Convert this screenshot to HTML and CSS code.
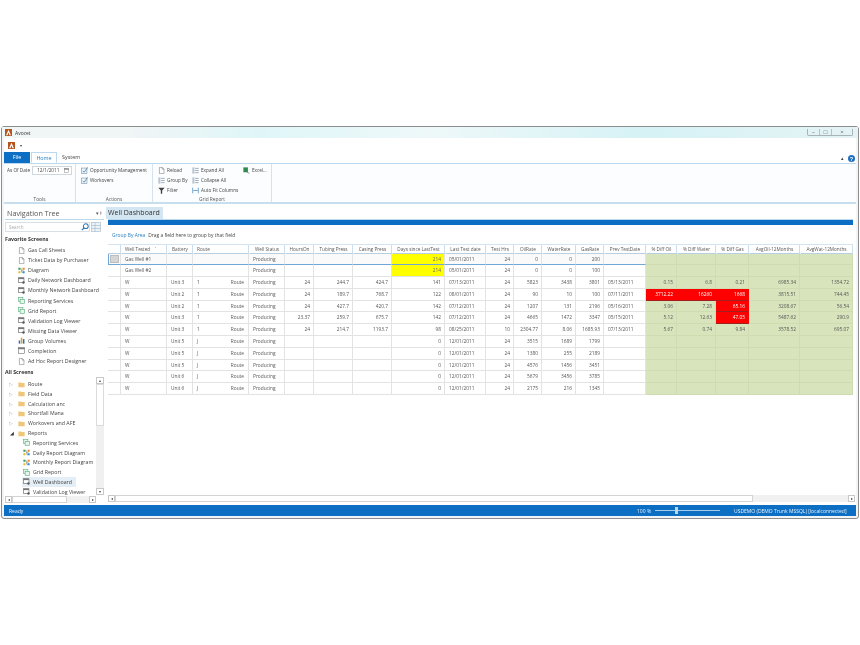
FILE: index.html
```html
<!DOCTYPE html>
<html lang="en">
<head>
  <meta charset="UTF-8" />
  <title>Avocet</title>
  <link rel="stylesheet" href="styles.css" />
</head>
<body>

<svg class="defs" width="0" height="0">
  <symbol id="i-doc" viewBox="0 0 10 10"><path d="M2 .5h4l2.500 2.500v6.500h-6.500z M6 .5v2.500h2.500" fill="#fff" stroke="#777" stroke-width=".8"/></symbol>
  <symbol id="i-diagram" viewBox="0 0 10 10"><path d="M2 2.500h3v5h3M5 5h3" fill="none" stroke="#8a8a8a" stroke-width=".8"/><rect x=".5" y="1" width="3" height="3" fill="#3aa655"/><rect x="6.500" y="1" width="3" height="3" fill="#ef8a2c"/><rect x="6.500" y="6" width="3" height="3" fill="#3a8fd0"/><rect x=".5" y="6" width="3" height="3" fill="#e0c030"/></symbol>
  <symbol id="i-screen" viewBox="0 0 10 10"><rect x=".5" y="1" width="8" height="7" fill="#fff" stroke="#666" stroke-width=".9"/><rect x=".5" y="1" width="8" height="2" fill="#777"/><circle cx="7.800" cy="7.800" r="1.700" fill="#555"/></symbol>
  <symbol id="i-report" viewBox="0 0 10 10"><rect x=".5" y=".5" width="6.500" height="6" fill="#e8f5ec" stroke="#4fa878" stroke-width=".8"/><rect x="3" y="3.500" width="6.500" height="6" fill="#e8f5ec" stroke="#4fa878" stroke-width=".8"/></symbol>
  <symbol id="i-bars" viewBox="0 0 10 10"><rect x="1" y="5" width="2.200" height="4.500" fill="#2f6fb8"/><rect x="4" y="1" width="2.200" height="8.500" fill="#e8a020"/><rect x="7" y="3" width="2.200" height="6.500" fill="#2f6fb8"/></symbol>
  <symbol id="i-cal" viewBox="0 0 10 10"><rect x=".5" y="1" width="9" height="8" fill="#fff" stroke="#666" stroke-width=".8"/><rect x=".5" y="1" width="9" height="2.200" fill="#777"/></symbol>
  <symbol id="i-folder" viewBox="0 0 10 10"><path d="M.5 2h3.500l1 1h4.500v6h-9z" fill="#eec77a"/></symbol>
  <symbol id="i-check" viewBox="0 0 10 10"><rect x=".5" y="1.500" width="8" height="8" fill="#eef5fb" stroke="#6e8fa8" stroke-width=".8"/><path d="M2.500 5.500l2 2 5-7" fill="none" stroke="#3a6f9a" stroke-width="1"/></symbol>
  <symbol id="i-lines" viewBox="0 0 10 10"><rect x=".5" y=".5" width="3" height="9" fill="#b9c6d2"/><path d="M4.500 2h5M4.500 5h5M4.500 8h5" stroke="#7d8fa0" stroke-width="1"/></symbol>
</svg>

<div class="window">
  <div class="titlebar">
    <svg class="logo" viewBox="0 0 10 10"><rect width="10" height="10" fill="#b5541c"/><path d="M1.500 9l3.500-8 3.500 8h-2l-1.500-4-1.500 4z" fill="#fff"/></svg>
    <span class="title">Avocet</span>
    <div class="win-btns"><span>&#8211;</span><span>&#9633;</span><span>&#215;</span></div>
  </div>

  <div class="qat">
    <svg class="logo" viewBox="0 0 10 10"><rect width="10" height="10" fill="#b5541c"/><path d="M1.500 9l3.500-8 3.500 8h-2l-1.500-4-1.500 4z" fill="#fff"/></svg>
    <span class="qat-drop">&#9662;</span>
  </div>

  <div class="tabs">
    <div class="tab tab-file">File</div>
    <div class="tab tab-home">Home</div>
    <div class="tab">System</div>
    <span class="tabs-right">&#9652;</span>
    <svg class="help" viewBox="0 0 10 10"><circle cx="5" cy="5" r="5" fill="#1f6fc0"/><text x="5" y="8" text-anchor="middle" font-size="8" font-weight="700" fill="#fff" font-family="Liberation Sans">?</text></svg>
  </div>

  <div class="ribbon">
    <div class="group group-tools">
      <div class="group-body">
        <div class="asof">
          <span>As Of Date</span>
          <div class="datebox">12/1/2011 <svg class="ico" viewBox="0 0 10 10"><use href="#i-cal"/></svg></div>
        </div>
      </div>
      <div class="group-label">Tools</div>
    </div>
    <div class="group group-actions">
      <div class="group-body col">
        <div class="rb"><svg class="ico"><use href="#i-check"/></svg>Opportunity Management</div>
        <div class="rb"><svg class="ico"><use href="#i-check"/></svg>Workovers</div>
      </div>
      <div class="group-label">Actions</div>
    </div>
    <div class="group group-grid">
      <div class="group-body">
        <div class="col col-a">
          <div class="rb"><svg class="ico"><use href="#i-doc"/></svg>Reload</div>
          <div class="rb"><svg class="ico"><use href="#i-lines"/></svg>Group By</div>
          <div class="rb"><svg class="ico" viewBox="0 0 10 10"><path d="M.5 1h9L6 5v4.500H4V5z" fill="#444"/></svg>Filter</div>
        </div>
        <div class="col col-b">
          <div class="rb"><svg class="ico"><use href="#i-lines"/></svg>Expand All</div>
          <div class="rb"><svg class="ico"><use href="#i-lines"/></svg>Collapse All</div>
          <div class="rb"><svg class="ico" viewBox="0 0 10 10"><path d="M1 1v8M9 1v8M2 5h6" fill="none" stroke="#3a7fb8" stroke-width="1"/></svg>Auto Fit Columns</div>
        </div>
        <div class="col col-c">
          <div class="rb"><svg class="ico" viewBox="0 0 10 10"><rect x=".5" y=".5" width="6.500" height="7" fill="#2f8a4f"/><path d="M6 7.500l3 1.500" stroke="#666" stroke-width="1"/></svg>Excel...</div>
        </div>
      </div>
      <div class="group-label">Grid Report</div>
    </div>
  </div>

  <div class="main">
    <aside class="nav">
      <div class="nav-head"><span>Navigation Tree</span><span class="nav-pins">&#9662; &#8225;</span></div>
      <div class="searchrow">
        <div class="search">Search<svg class="mag" viewBox="0 0 10 10"><circle cx="6" cy="4" r="3" fill="none" stroke="#2d78b8" stroke-width="1.300"/><path d="M4 6L1 9" stroke="#2d78b8" stroke-width="1.500"/></svg></div>
        <svg class="viewbtn" viewBox="0 0 10 10"><rect x=".5" y=".5" width="9" height="9" fill="#eef3f8" stroke="#9db5c9" stroke-width=".6"/><path d="M4 .5v9M.5 3.500h9M.5 6.500h9" stroke="#9db5c9" stroke-width=".6"/></svg>
      </div>
      <div class="nav-scroll">
        <h4>Favorite Screens</h4>
        <ul class="fav">
          <li><svg class="ico"><use href="#i-doc"/></svg>Gas Call Sheets</li>
          <li><svg class="ico"><use href="#i-doc"/></svg>Ticket Data by Purchaser</li>
          <li><svg class="ico"><use href="#i-diagram"/></svg>Diagram</li>
          <li><svg class="ico"><use href="#i-screen"/></svg>Daily Network Dashboard</li>
          <li><svg class="ico"><use href="#i-screen"/></svg>Monthly Network Dashboard</li>
          <li><svg class="ico"><use href="#i-report"/></svg>Reporting Services</li>
          <li><svg class="ico"><use href="#i-report"/></svg>Grid Report</li>
          <li><svg class="ico"><use href="#i-screen"/></svg>Validation Log Viewer</li>
          <li><svg class="ico"><use href="#i-screen"/></svg>Missing Data Viewer</li>
          <li><svg class="ico"><use href="#i-bars"/></svg>Group Volumes</li>
          <li><svg class="ico"><use href="#i-cal"/></svg>Completion</li>
          <li><svg class="ico"><use href="#i-doc"/></svg>Ad Hoc Report Designer</li>
        </ul>
        <h4 class="h-all">All Screens</h4>
        <div class="tree-wrap">
          <div class="tree">
            <div class="t-row"><i class="arrow">&#9655;</i><svg class="ico"><use href="#i-folder"/></svg>Route</div>
            <div class="t-row"><i class="arrow">&#9655;</i><svg class="ico"><use href="#i-folder"/></svg>Field Data</div>
            <div class="t-row"><i class="arrow">&#9655;</i><svg class="ico"><use href="#i-folder"/></svg>Calculation anc</div>
            <div class="t-row"><i class="arrow">&#9655;</i><svg class="ico"><use href="#i-folder"/></svg>Shortfall Mana</div>
            <div class="t-row"><i class="arrow">&#9655;</i><svg class="ico"><use href="#i-folder"/></svg>Workovers and AFE</div>
            <div class="t-row"><i class="arrow dark">&#9698;</i><svg class="ico"><use href="#i-folder"/></svg>Reports</div>
            <div class="t-row sub"><svg class="ico"><use href="#i-report"/></svg>Reporting Services</div>
            <div class="t-row sub"><svg class="ico"><use href="#i-diagram"/></svg>Daily Report Diagram</div>
            <div class="t-row sub"><svg class="ico"><use href="#i-diagram"/></svg>Monthly Report Diagram</div>
            <div class="t-row sub"><svg class="ico"><use href="#i-report"/></svg>Grid Report</div>
            <div class="t-row sub on"><svg class="ico"><use href="#i-screen"/></svg>Well Dashboard</div>
            <div class="t-row sub"><svg class="ico"><use href="#i-screen"/></svg>Validation Log Viewer</div>
          </div>
          <div class="vscroll"><b>&#9652;</b><span class="thumb"></span><b>&#9662;</b></div>
        </div>
        <div class="hscroll nav-h"><b>&#9666;</b><span class="hthumb"></span><b>&#9656;</b></div>
      </div>
    </aside>

    <section class="content">
      <div class="doc-tab">Well Dashboard</div>
      <div class="doc-bar"></div>
      <div class="groupby"><a>Group By Area</a><span>Drag a field here to group by that field</span></div>

      <div class="grid">
        <div class="hd"></div><div class="hd l">Well Tested <span class="sort">&#710;</span></div><div class="hd">Battery</div><div class="hd l">Route</div><div class="hd">Well Status</div><div class="hd">HoursOn</div><div class="hd">Tubing Press</div><div class="hd">Casing Press</div><div class="hd">Days since LastTest</div><div class="hd">Last Test date</div><div class="hd">Test Hrs</div><div class="hd">OilRate</div><div class="hd">WaterRate</div><div class="hd">GasRate</div><div class="hd">Prev TestDate</div><div class="hd">% Diff Oil</div><div class="hd">% Diff Water</div><div class="hd">% Diff Gas</div><div class="hd">AvgOil-12Months</div><div class="hd">AvgWat-12Months</div>

        <div class="c s rh"><span class="rh-box"></span></div><div class="c s">Gas Well #1</div><div class="c s"></div><div class="c s"></div><div class="c s">Producing</div><div class="c s"></div><div class="c s"></div><div class="c s"></div><div class="c s n y">214</div><div class="c s">05/01/2011</div><div class="c s n">24</div><div class="c s n">0</div><div class="c s n">0</div><div class="c s n">200</div><div class="c s"></div><div class="c g"></div><div class="c g"></div><div class="c g"></div><div class="c g"></div><div class="c g"></div>

        <div class="c"></div><div class="c">Gas Well #2</div><div class="c"></div><div class="c"></div><div class="c">Producing</div><div class="c"></div><div class="c"></div><div class="c"></div><div class="c n y">214</div><div class="c">05/01/2011</div><div class="c n">24</div><div class="c n">0</div><div class="c n">0</div><div class="c n">100</div><div class="c"></div><div class="c g"></div><div class="c g"></div><div class="c g"></div><div class="c g"></div><div class="c g"></div>

        <div class="c"></div><div class="c">W</div><div class="c">Unit 3</div><div class="c rt"><span>1</span><span>Route</span></div><div class="c">Producing</div><div class="c n">24</div><div class="c n">244.7</div><div class="c n">424.7</div><div class="c n">141</div><div class="c">07/13/2011</div><div class="c n">24</div><div class="c n">5823</div><div class="c n">3438</div><div class="c n">3801</div><div class="c">05/13/2011</div><div class="c n g">0.15</div><div class="c n g">6.8</div><div class="c n g">0.21</div><div class="c n g">6985.34</div><div class="c n g">1354.72</div>

        <div class="c"></div><div class="c">W</div><div class="c">Unit 2</div><div class="c rt"><span>1</span><span>Route</span></div><div class="c">Producing</div><div class="c n">24</div><div class="c n">189.7</div><div class="c n">768.7</div><div class="c n">122</div><div class="c">08/01/2011</div><div class="c n">24</div><div class="c n">90</div><div class="c n">10</div><div class="c n">100</div><div class="c">07/11/2011</div><div class="c n red">3712.22</div><div class="c n red">16260</div><div class="c n red">1668</div><div class="c n g">3815.51</div><div class="c n g">744.45</div>

        <div class="c"></div><div class="c">W</div><div class="c">Unit 2</div><div class="c rt"><span>1</span><span>Route</span></div><div class="c">Producing</div><div class="c n">24</div><div class="c n">427.7</div><div class="c n">420.7</div><div class="c n">142</div><div class="c">07/12/2011</div><div class="c n">24</div><div class="c n">1207</div><div class="c n">131</div><div class="c n">2196</div><div class="c">05/16/2011</div><div class="c n g">3.06</div><div class="c n g">7.28</div><div class="c n red">65.16</div><div class="c n g">3208.67</div><div class="c n g">56.54</div>

        <div class="c"></div><div class="c">W</div><div class="c">Unit 3</div><div class="c rt"><span>1</span><span>Route</span></div><div class="c">Producing</div><div class="c n">23.37</div><div class="c n">259.7</div><div class="c n">675.7</div><div class="c n">142</div><div class="c">07/12/2011</div><div class="c n">24</div><div class="c n">4665</div><div class="c n">1472</div><div class="c n">3347</div><div class="c">05/15/2011</div><div class="c n g">5.12</div><div class="c n g">12.63</div><div class="c n red">47.05</div><div class="c n g">5487.62</div><div class="c n g">290.9</div>

        <div class="c"></div><div class="c">W</div><div class="c">Unit 3</div><div class="c rt"><span>1</span><span>Route</span></div><div class="c">Producing</div><div class="c n">24</div><div class="c n">214.7</div><div class="c n">1193.7</div><div class="c n">98</div><div class="c">08/25/2011</div><div class="c n">10</div><div class="c n">2304.77</div><div class="c n">8.06</div><div class="c n">1685.93</div><div class="c">07/13/2011</div><div class="c n g">5.67</div><div class="c n g">0.74</div><div class="c n g">9.84</div><div class="c n g">3578.52</div><div class="c n g">695.07</div>

        <div class="c"></div><div class="c">W</div><div class="c">Unit 5</div><div class="c rt"><span>J</span><span>Route</span></div><div class="c">Producing</div><div class="c"></div><div class="c"></div><div class="c"></div><div class="c n">0</div><div class="c">12/01/2011</div><div class="c n">24</div><div class="c n">3515</div><div class="c n">1689</div><div class="c n">1799</div><div class="c"></div><div class="c g"></div><div class="c g"></div><div class="c g"></div><div class="c g"></div><div class="c g"></div>

        <div class="c"></div><div class="c">W</div><div class="c">Unit 5</div><div class="c rt"><span>J</span><span>Route</span></div><div class="c">Producing</div><div class="c"></div><div class="c"></div><div class="c"></div><div class="c n">0</div><div class="c">12/01/2011</div><div class="c n">24</div><div class="c n">1380</div><div class="c n">255</div><div class="c n">2189</div><div class="c"></div><div class="c g"></div><div class="c g"></div><div class="c g"></div><div class="c g"></div><div class="c g"></div>

        <div class="c"></div><div class="c">W</div><div class="c">Unit 5</div><div class="c rt"><span>J</span><span>Route</span></div><div class="c">Producing</div><div class="c"></div><div class="c"></div><div class="c"></div><div class="c n">0</div><div class="c">12/01/2011</div><div class="c n">24</div><div class="c n">4576</div><div class="c n">1456</div><div class="c n">3451</div><div class="c"></div><div class="c g"></div><div class="c g"></div><div class="c g"></div><div class="c g"></div><div class="c g"></div>

        <div class="c"></div><div class="c">W</div><div class="c">Unit 6</div><div class="c rt"><span>J</span><span>Route</span></div><div class="c">Producing</div><div class="c"></div><div class="c"></div><div class="c"></div><div class="c n">0</div><div class="c">12/01/2011</div><div class="c n">24</div><div class="c n">5679</div><div class="c n">3456</div><div class="c n">3785</div><div class="c"></div><div class="c g"></div><div class="c g"></div><div class="c g"></div><div class="c g"></div><div class="c g"></div>

        <div class="c"></div><div class="c">W</div><div class="c">Unit 6</div><div class="c rt"><span>J</span><span>Route</span></div><div class="c">Producing</div><div class="c"></div><div class="c"></div><div class="c"></div><div class="c n">0</div><div class="c">12/01/2011</div><div class="c n">24</div><div class="c n">2175</div><div class="c n">216</div><div class="c n">1345</div><div class="c"></div><div class="c g"></div><div class="c g"></div><div class="c g"></div><div class="c g"></div><div class="c g"></div>
      </div>

      <div class="hscroll grid-h"><b>&#9666;</b><span class="hthumb"></span><b>&#9656;</b></div>
    </section>
  </div>

  <div class="status">
    <span class="ready">Ready</span>
    <span class="zoom">100 %</span>
    <div class="slider"><span class="knob"></span></div>
    <span class="conn">USDEMO (DEMO Trunk MSSQL) [localconnected]</span>
  </div>
</div>

</body>
</html>
```

FILE: styles.css
```css
* {
  box-sizing: border-box;
  margin: 0;
  padding: 0;
}

html, body {
  height: 100%;
  background: #fff;
  overflow: hidden;
}

body {
  font-family: "Open Sans", "Noto Sans", sans-serif;
  font-size: 5.1px;
  color: #444;
}

.defs {
  position: absolute;
}

.window {
  margin: 126px 1px 0;
  height: 393px;
  border: 1px solid #8d8d8d;
  border-radius: 3px;
  background: #f1f5f7;
  padding: 0 2px 2px;
  display: flex;
  flex-direction: column;
  filter: blur(0.4px);
}

.ico {
  width: 7px;
  height: 7px;
  flex: none;
}

/* title bar */
.titlebar {
  height: 11px;
  display: flex;
  align-items: center;
  gap: 3px;
  background: linear-gradient(90deg, #f0f5f6 0, #f0f5f6 15%, #dff6f8 30%, #eef8f9 50%, #d6f2f5 75%, #e4f3f5 100%);
  margin: 0 -2px;
  padding: 0 3px;
}

.logo {
  width: 7px;
  height: 7px;
}

.title {
  font-size: 5px;
  color: #333;
}

.win-btns {
  margin-left: auto;
  margin-right: 2px;
  display: flex;
  height: 7px;
  border: 1px solid #a9b2b8;
  border-top: none;
  border-radius: 0 0 2px 2px;
}

.win-btns span {
  width: 12px;
  line-height: 6px;
  text-align: center;
  font-size: 6px;
  color: #666;
  border-right: 1px solid #b9c1c6;
}

.win-btns span:last-child {
  width: 20px;
  border: none;
}

.qat {
  height: 15px;
  background: #fff;
  display: flex;
  align-items: center;
  gap: 5px;
  padding: 0 4px;
}

.qat-drop {
  font-size: 4px;
}

/* tabs */
.tabs {
  height: 11px;
  background: #fff;
  display: flex;
  align-items: flex-end;
  gap: 1px;
  border-bottom: 1px solid #bcd8ec;
  position: relative;
}

.tab {
  height: 11px;
  line-height: 11px;
  font-size: 5.4px;
  padding: 0 4px;
  color: #444;
}

.tab-file {
  width: 26px;
  background: #0c6fc4;
  color: #fff;
  text-align: center;
}

.tab-home {
  width: 26px;
  text-align: center;
  color: #2a7fc0;
  border: 1px solid #bcd8ec;
  border-bottom: 1px solid #fff;
  line-height: 10px;
  margin-right: 0;
}

.tabs-right {
  margin-left: auto;
  font-size: 5px;
  align-self: center;
  margin-right: 3px;
}

.help {
  width: 7px;
  height: 7px;
  align-self: center;
  margin-right: 1px;
}

/* ribbon */
.ribbon {
  height: 40px;
  background: #fbfdfe;
  display: flex;
  border-bottom: 2px solid #c7deef;
  font-size: 4.7px;
}

.group {
  display: flex;
  flex-direction: column;
  border-right: 1px solid #d4e3ef;
  padding-top: 1px;
}

.group-tools { width: 72px; }
.group-actions { width: 77px; }
.group-grid { width: 119px; }

.group-body {
  height: 30px;
  flex: none;
  display: flex;
}

.group-label {
  height: 7px;
  line-height: 8px;
  text-align: center;
  font-size: 4.8px;
  color: #555;
}

.asof {
  display: flex;
  align-items: center;
  gap: 2px;
  height: 10px;
  padding-left: 3px;
  white-space: nowrap;
}

.datebox {
  width: 40px;
  height: 9px;
  border: 1px solid #cfd7dd;
  background: #fff;
  display: flex;
  align-items: center;
  justify-content: space-between;
  padding: 0 2px 0 4px;
}

.datebox .ico {
  width: 5px;
  height: 5px;
}

.col {
  display: flex;
  flex-direction: column;
}

.group-actions .col {
  padding-left: 5px;
}

.col-a { width: 39px; padding-left: 5px; }
.col-b { width: 51px; }
.col-c { width: 28px; }

.rb {
  height: 10px;
  display: flex;
  align-items: center;
  gap: 2px;
  white-space: nowrap;
}

/* navigation */
.main {
  flex: 1;
  display: flex;
  background: #fff;
  min-height: 0;
}

.nav {
  width: 100px;
  flex: none;
  display: flex;
  flex-direction: column;
  padding-left: 1px;
  overflow: hidden;
  font-size: 5.25px;
}

.nav-head {
  height: 16px;
  padding: 2px 0 0 2px;
  font-size: 7.2px;
  color: #555;
  display: flex;
  justify-content: space-between;
  align-items: center;
  border-bottom: 1px solid #bcd8ec;
}

.nav-pins {
  font-size: 4.5px;
  margin-right: 2px;
}

.searchrow {
  display: flex;
  gap: 1px;
  margin-top: 2px;
  height: 11px;
}

.search {
  width: 85px;
  height: 10px;
  border: 1px solid #d9dfe4;
  padding-left: 3px;
  line-height: 8px;
  font-size: 4.6px;
  color: #aaa;
  display: flex;
  justify-content: space-between;
  align-items: center;
}

.mag {
  width: 8px;
  height: 8px;
}

.viewbtn {
  width: 10px;
  height: 10px;
}

.nav-scroll {
  flex: 1;
  min-height: 0;
  display: flex;
  flex-direction: column;
}

.nav h4 {
  font-size: 5.25px;
  font-weight: 700;
  color: #333;
  height: 10px;
  line-height: 10px;
  margin-top: 1px;
}

.fav {
  list-style: none;
  margin-top: 1px;
}

.fav li {
  height: 10.1px;
  display: flex;
  align-items: center;
  gap: 3px;
  padding-left: 13px;
  white-space: nowrap;
}

.tree-wrap {
  display: flex;
  flex: 1;
  min-height: 0;
}

.tree {
  width: 91px;
  overflow: hidden;
  padding-top: 2px;
}

.t-row {
  height: 9.8px;
  display: flex;
  align-items: center;
  gap: 3px;
  white-space: nowrap;
  padding-left: 13px;
  position: relative;
}

.t-row.sub {
  padding-left: 18px;
}

.t-row.on {
  background: #e4eef7;
  margin-left: 17px;
  padding-left: 1px;
  width: 54px;
}

.arrow {
  position: absolute;
  left: 4px;
  font-style: normal;
  font-size: 4.5px;
  color: #aaa;
}

.arrow.dark {
  color: #333;
  left: 5px;
}

.vscroll {
  width: 8px;
  margin-left: 1px;
  background: #f0f0f0;
  display: flex;
  flex-direction: column;
  font-size: 4px;
  text-align: center;
}

.vscroll b {
  height: 7px;
  border: 1px solid #c8c8c8;
  background: #fff;
  line-height: 5px;
  font-weight: 400;
}

.thumb {
  height: 42px;
  background: #fff;
  border: 1px solid #dcdcdc;
  flex: none;
}

.vscroll b:last-child {
  margin-top: auto;
}

.hscroll {
  display: flex;
  height: 7px;
  flex: none;
  font-size: 4px;
  background: #f1f1f1;
}

.hscroll b {
  width: 7px;
  flex: none;
  height: 7px;
  border: 1px solid #c8c8c8;
  background: #fff;
  text-align: center;
  line-height: 5px;
  font-weight: 400;
}

.hscroll b:last-child {
  margin-left: auto;
}

.hthumb {
  background: #fff;
  border: 1px solid #d4d4d4;
}

.nav-h {
  margin-top: 1px;
  margin-bottom: 2px;
  width: 91px;
}

.nav-h .hthumb {
  width: 55px;
}

/* content */
.content {
  flex: 1;
  min-width: 0;
  display: flex;
  flex-direction: column;
  padding: 3px 2px 0 2px;
}

.doc-tab {
  width: 57px;
  height: 12px;
  line-height: 12px;
  background: #d5e6f3;
  font-size: 7px;
  color: #333;
  padding-left: 2px;
}

.doc-bar {
  height: 6px;
  background: #0c6fc4;
  border-top: 1px solid #bcd8ec;
  margin: 0 0 0 2px;
  width: 745px;
}

.groupby {
  height: 18.5px;
  padding: 7px 0 0 6px;
  display: flex;
  gap: 3px;
  white-space: nowrap;
  line-height: 7px;
  font-size: 4.9px;
}

.groupby a {
  color: #2a7fc0;
}

.grid {
  display: grid;
  width: 745px;
  margin-left: 2px;
  grid-template-columns: 13px 46px 26px 56px 36px 29px 39px 39px 53px 41px 28px 28px 34px 28px 42px 31px 39px 33px 51px 53px;
  grid-template-rows: 9px repeat(12, 11.8px);
  border-top: 1px solid #d5e4f0;
}

.hd {
  font-size: 4.7px;
  line-height: 8px;
  text-align: center;
  white-space: nowrap;
  border-right: 1px solid #c9dff0;
  border-bottom: 1px solid #b7cfe2;
  border-left: 1px solid #fff;
  overflow: hidden;
  color: #555;
}

.hd.l {
  text-align: left;
  padding-left: 3px;
}

.sort {
  color: #aaa;
  margin-left: 3px;
}

.c {
  font-size: 4.8px;
  line-height: 10.8px;
  padding: 0 4px;
  white-space: nowrap;
  overflow: hidden;
  border-right: 1px solid #e3e3e3;
  border-bottom: 1px solid #e3e3e3;
  color: #555;
}

.n {
  text-align: right;
  padding-right: 3px;
}

.rt {
  display: flex;
  justify-content: space-between;
}

.s {
  background: #fafafa;
  border-bottom: 1px solid #6fa8d6;
}

.rh {
  padding: 1px;
  border-left: 1px solid #6fa8d6;
}

.rh-box {
  display: block;
  width: 100%;
  height: 100%;
  background: #d6d6d6;
  border: 1px solid #bdbdbd;
}

.y {
  background: #ffff00;
  color: #666;
}

.g {
  background: #d8e4bc;
  border-color: #cfdcb2;
}

.red {
  background: #ff0000;
  color: #fff;
  border-right-color: #ff0000;
  border-bottom-color: #a02020;
}

.grid-h {
  margin-top: auto;
  margin-bottom: 3px;
  margin-left: 2px;
  width: 747px;
}

.grid-h .hthumb {
  width: 638px;
}

/* status bar */
.status {
  height: 11px;
  flex: none;
  background: #0c6fc4;
  color: #e9f3fb;
  display: flex;
  align-items: center;
  font-size: 5px;
  padding-left: 5px;
  position: relative;
}

.ready {
  width: 628px;
}

.zoom {
  width: 18px;
}

.slider {
  width: 65px;
  height: 1px;
  background: #a8cdea;
  position: relative;
  margin-right: 14px;
}

.knob {
  position: absolute;
  left: 20px;
  top: -3px;
  width: 3px;
  height: 7px;
  background: #bcd6ea;
}

.conn {
  white-space: nowrap;
}
```
